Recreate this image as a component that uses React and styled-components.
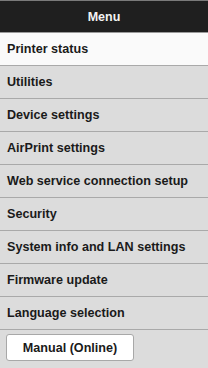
import styled, { createGlobalStyle } from "styled-components";

const GlobalStyle = createGlobalStyle`
  html, body {
    margin: 0;
    padding: 0;
    background-color: #dcdcdc;
  }
`;

const Container = styled.div`
  width: 208px;
  height: 368px;
  background-color: #dcdcdc;
  font-family: "Liberation Sans", Arial, sans-serif;
  overflow: hidden;
`;

const Header = styled.div`
  height: 31px;
  display: flex;
  align-items: center;
  justify-content: center;
  background-color: #1f1f1f;
  border-top: 1px solid #7a7a7a;
  border-bottom: 1px solid #9a9a9a;
  color: #f2f2f2;
  font-size: 12.5px;
  font-weight: bold;
`;

const MenuList = styled.ul`
  list-style: none;
  margin: 0;
  padding: 0;
`;

const Item = styled.li`
  height: 32px;
  display: flex;
  align-items: center;
  padding-left: 7px;
  background-color: ${(p) => (p.$active ? "#fafafa" : "#dcdcdc")};
  border-bottom: 1px solid #a9a9a9;
  color: #1a1a1a;
  font-size: 12.6px;
  font-weight: bold;
  white-space: nowrap;
`;

const Footer = styled.div`
  padding: 4px 6px;
`;

const ManualButton = styled.button`
  width: 128px;
  height: 27px;
  background-color: #fff;
  border: 1px solid #a8a8a8;
  border-radius: 3px;
  color: #1a1a1a;
  font-family: "Liberation Sans", Arial, sans-serif;
  font-size: 12.6px;
  font-weight: bold;
  padding: 0;
`;

const items = [
  "Printer status",
  "Utilities",
  "Device settings",
  "AirPrint settings",
  "Web service connection setup",
  "Security",
  "System info and LAN settings",
  "Firmware update",
  "Language selection",
];

export default function App() {
  return (
    <>
      <GlobalStyle />
      <Container>
        <Header>Menu</Header>
        <MenuList>
          {items.map((label, i) => (
            <Item key={label} $active={i === 0}>
              {label}
            </Item>
          ))}
        </MenuList>
        <Footer>
          <ManualButton>Manual (Online)</ManualButton>
        </Footer>
      </Container>
    </>
  );
}
